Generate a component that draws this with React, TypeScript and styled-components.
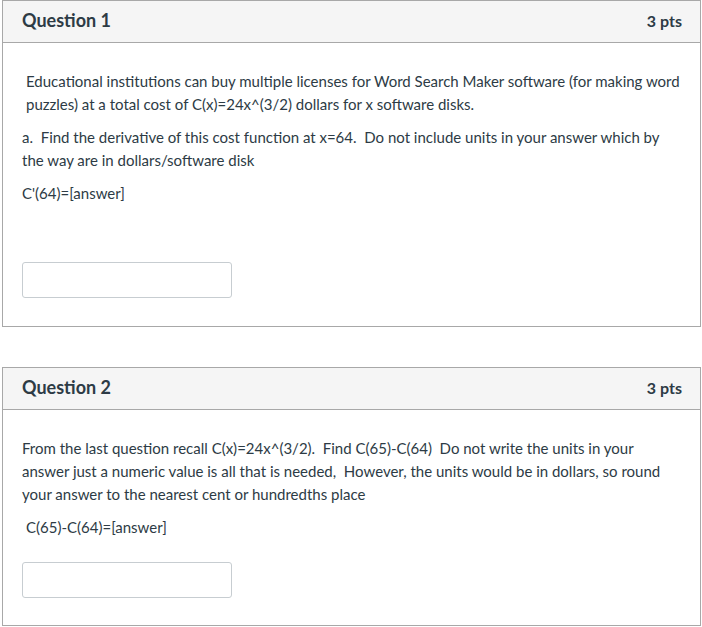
import React from "react";
import styled, { createGlobalStyle } from "styled-components";

const GlobalStyle = createGlobalStyle`
  html, body {
    margin: 0;
    padding: 0;
    background: #ffffff;
  }
  body {
    font-family: Lato, "Open Sans", "Liberation Sans", sans-serif;
    color: #2d3b45;
  }
`;

const Page = styled.div`
  display: flex;
  flex-direction: column;
  gap: 40px;
  padding: 0 1px 0 2px;
`;

const QuestionCard = styled.div`
  border: 1px solid #a8a8a8;
  background: #ffffff;
`;

const Header = styled.div`
  display: flex;
  align-items: center;
  justify-content: space-between;
  box-sizing: border-box;
  height: 42px;
  padding: 0 18px 3px 19px;
  background: #f5f5f5;
  border-bottom: 1px solid #a8a8a8;
`;

const Title = styled.div`
  font-size: 18px;
  font-weight: 700;
  color: #2d3b45;
`;

const Points = styled.div`
  font-size: 16px;
  font-weight: 700;
  color: #2d3b45;
`;

const Body = styled.div<{ $bottom: number }>`
  padding: 27px 18px ${(p) => p.$bottom}px 19px;
`;

const Paragraph = styled.p<{ $indent?: boolean }>`
  margin: 0 0 10px;
  font-size: 15px;
  line-height: 23px;
  white-space: nowrap;
  padding-left: ${(p) => (p.$indent ? "4px" : "0")};
`;

const AnswerInput = styled.input<{ $top: number }>`
  display: block;
  width: 210px;
  height: 36px;
  box-sizing: border-box;
  margin-top: ${(p) => p.$top}px;
  border: 1px solid #c7cdd1;
  border-radius: 3px;
  background: #ffffff;
  outline: none;
`;

export default function App() {
  return (
    <>
      <GlobalStyle />
      <Page>
        <QuestionCard>
          <Header>
            <Title>Question 1</Title>
            <Points>3 pts</Points>
          </Header>
          <Body $bottom={28}>
            <Paragraph $indent>
              Educational institutions can buy multiple licenses for Word Search Maker software (for making word
              <br />
              puzzles) at a total cost of C(x)=24x^(3/2) dollars for x software disks.
            </Paragraph>
            <Paragraph>
              a.&nbsp; Find the derivative of this cost function at x=64.&nbsp; Do not include units in your answer which by
              <br />
              the way are in dollars/software disk
            </Paragraph>
            <Paragraph>C'(64)=[answer]</Paragraph>
            <AnswerInput $top={57} aria-label="answer 1" />
          </Body>
        </QuestionCard>
        <QuestionCard>
          <Header>
            <Title>Question 2</Title>
            <Points>3 pts</Points>
          </Header>
          <Body $bottom={27}>
            <Paragraph>
              From the last question recall C(x)=24x^(3/2).&nbsp; Find C(65)-C(64)&nbsp; Do not write the units in your
              <br />
              answer just a numeric value is all that is needed,&nbsp; However, the units would be in dollars, so round
              <br />
              your answer to the nearest cent or hundredths place
            </Paragraph>
            <Paragraph $indent>C(65)-C(64)=[answer]</Paragraph>
            <AnswerInput $top={23} aria-label="answer 2" />
          </Body>
        </QuestionCard>
      </Page>
    </>
  );
}
